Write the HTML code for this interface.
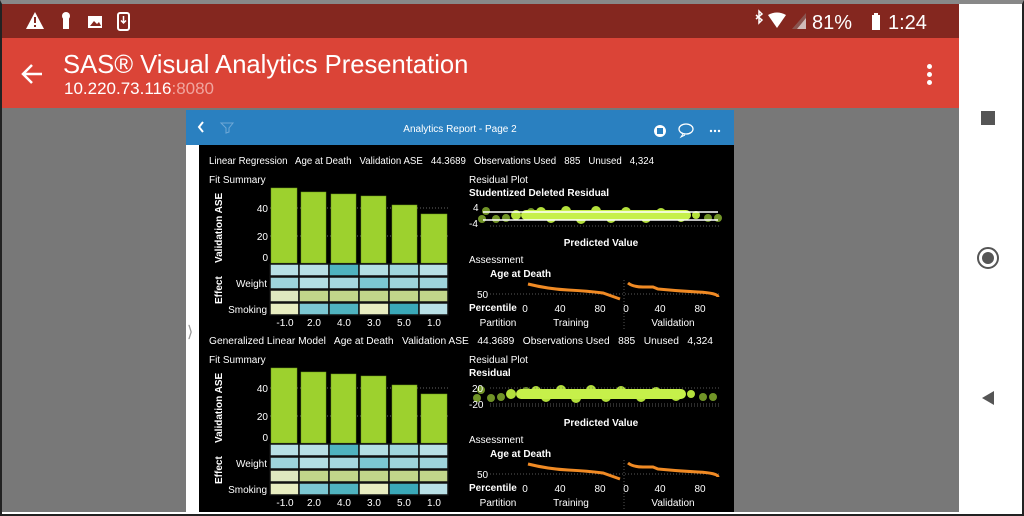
<!DOCTYPE html>
<html><head><meta charset="utf-8"><style>
body{margin:0;width:1024px;height:516px;overflow:hidden;background:#fff;font-family:"Liberation Sans",sans-serif;position:relative}
.a{position:absolute}
</style></head><body>
<div class="a" style="left:0;top:0;width:1024px;height:516px;box-sizing:border-box;border:2px solid #222;border-top:4px solid #888;"></div>
<div class="a" style="left:2px;top:4px;width:957px;height:34px;background:#84271f"></div>
<div class="a" style="left:2px;top:38px;width:957px;height:70px;background:#db4437"></div>
<div class="a" style="left:2px;top:108px;width:957px;height:404px;background:#787878"></div>
<div class="a" style="left:959px;top:4px;width:63px;height:508px;background:#fff"></div>
<svg class="a" style="left:0;top:4px" width="960" height="34">
<polygon points="35,8 44,25 26,25" fill="#fff"/><rect x="34" y="13" width="2" height="6" fill="#84271f"/><rect x="34" y="21" width="2" height="2" fill="#84271f"/>
<circle cx="66" cy="12" r="4" fill="#fff"/><rect x="63" y="13" width="6" height="12" fill="#fff"/>
<rect x="88" y="12" width="14" height="12" fill="#fff"/><polygon points="90,22 94,17 97,20 99,18 101,22" fill="#84271f"/>
<rect x="118" y="9" width="11" height="17" rx="2" fill="none" stroke="#fff" stroke-width="2"/><path d="M123.5 12v7m-2.5-2.5l2.5 2.5 2.5-2.5" stroke="#fff" stroke-width="1.5" fill="none"/>
<path d="M756 11l6 5-3 3v-12l3 3-6 5" stroke="#fff" stroke-width="1.5" fill="none"/>
<path d="M768 11q9-5 18 0l-9 13z" fill="#fff"/>
<polygon points="806,9 806,25 792,25" fill="#8a5550"/><polygon points="806,14 806,25 797,25" fill="#fff" opacity="0.6"/>
<text x="812" y="25" fill="#fff" font-size="20" font-family="Liberation Sans">81%</text>
<rect x="872" y="11" width="8" height="15" fill="#fff"/><rect x="874" y="9" width="4" height="2" fill="#fff"/>
<text x="888" y="25" fill="#fff" font-size="20" font-family="Liberation Sans">1:24</text>
</svg>
<svg class="a" style="left:20px;top:62px" width="26" height="24"><path d="M22 12H4M12 3l-9 9 9 9" stroke="#fff" stroke-width="2.5" fill="none"/></svg>
<div class="a" style="left:63px;top:50px;color:#fff;font-size:25.6px;line-height:30px">SAS® Visual Analytics Presentation</div>
<div class="a" style="left:64px;top:79px;color:#fff;font-size:17px;line-height:20px">10.220.73.116<span style="color:#f0a59e">:8080</span></div>
<div class="a" style="left:927px;top:64px;width:5px;height:5px;border-radius:50%;background:#fff;box-shadow:0 8px 0 #fff,0 16px 0 #fff"></div>
<div class="a" style="left:981px;top:111px;width:14px;height:14px;background:#555"></div>
<div class="a" style="left:977px;top:247px;width:18px;height:18px;border-radius:50%;border:2px solid #555;"></div>
<div class="a" style="left:982px;top:252px;width:12px;height:12px;border-radius:50%;background:#555"></div>
<svg class="a" style="left:980px;top:390px" width="16" height="16"><polygon points="14,1 14,15 2,8" fill="#555"/></svg>
<div class="a" style="left:186px;top:110px;width:548px;height:35px;background:#2a80c0"></div>
<div class="a" style="left:186px;top:145px;width:548px;height:367px;background:#000"></div>
<div class="a" style="left:186px;top:145px;width:13px;height:367px;background:#fff"></div>
<div class="a" style="left:187px;top:322px;color:#999;font-size:16px">⟩</div>
<svg class="a" style="left:186px;top:110px" width="548" height="35">
<path d="M17 12l-4 5 4 5" stroke="#fff" stroke-width="2" fill="none"/>
<path d="M35 13h12l-4 5v4l-3 1v-5z" stroke="#6fa8d6" stroke-width="1" fill="none"/>
<text x="274" y="22" fill="#fff" font-size="10" text-anchor="middle" font-family="Liberation Sans">Analytics Report - Page 2</text>
<circle cx="474" cy="21" r="6" fill="#fff"/><rect x="471" y="18" width="6" height="6" fill="#2a80c0"/>
<ellipse cx="500" cy="19" rx="7" ry="5" fill="none" stroke="#fff" stroke-width="1.3"/><path d="M497 24l-2 3 4-2" stroke="#fff" fill="none"/>
<circle cx="525" cy="21" r="1.2" fill="#fff"/><circle cx="529" cy="21" r="1.2" fill="#fff"/><circle cx="533" cy="21" r="1.2" fill="#fff"/>
</svg>
<svg class="a" style="left:0;top:0" width="1024" height="516" font-family="Liberation Sans" font-size="10">
<defs>
<g id="blk">
<text x="222" y="263" fill="#fff" font-size="10" font-weight="bold" transform="rotate(-90 222 263)">Validation ASE</text>
<text x="222" y="304" fill="#fff" font-size="10" font-weight="bold" transform="rotate(-90 222 304)">Effect</text>
<g stroke="#888" stroke-dasharray="1 2" stroke-width="0.7"><line x1="270" y1="208" x2="450" y2="208"/><line x1="270" y1="236" x2="450" y2="236"/></g>
<g fill="#fff" text-anchor="end"><text x="268" y="212">40</text><text x="268" y="240">20</text><text x="268" y="261">0</text>
<text x="267" y="287">Weight</text><text x="267" y="313">Smoking</text></g>
<g fill="#9dd12e" stroke="#6c9a1a" stroke-width="0.5">
<rect x="271" y="188" width="26" height="75"/><rect x="301" y="192" width="25" height="71"/><rect x="331" y="194" width="25" height="69"/><rect x="361" y="196" width="25" height="67"/><rect x="392" y="205" width="25" height="58"/><rect x="421" y="214" width="26" height="49"/>
</g>
<g stroke="#111" stroke-width="1.5">
<rect x="270" y="264" width="29" height="12" fill="#b8e0e6"/><rect x="299" y="264" width="30" height="12" fill="#b8e0e6"/><rect x="329" y="264" width="30" height="12" fill="#4fb3bf"/><rect x="359" y="264" width="30" height="12" fill="#b3dfe4"/><rect x="389" y="264" width="30" height="12" fill="#a0d6de"/><rect x="419" y="264" width="29" height="12" fill="#b8e0e6"/>
<rect x="270" y="277" width="29" height="12" fill="#9ed4dc"/><rect x="299" y="277" width="30" height="12" fill="#b3dfe4"/><rect x="329" y="277" width="30" height="12" fill="#a6d8e0"/><rect x="359" y="277" width="30" height="12" fill="#7cc7d2"/><rect x="389" y="277" width="30" height="12" fill="#9ed4dc"/><rect x="419" y="277" width="29" height="12" fill="#9ed4dc"/>
<rect x="270" y="290" width="29" height="12" fill="#dfe8c0"/><rect x="299" y="290" width="30" height="12" fill="#c2d68a"/><rect x="329" y="290" width="30" height="12" fill="#c2d68a"/><rect x="359" y="290" width="30" height="12" fill="#c2d68a"/><rect x="389" y="290" width="30" height="12" fill="#c2d68a"/><rect x="419" y="290" width="29" height="12" fill="#c2d68a"/>
<rect x="270" y="303" width="29" height="12" fill="#e8edc0"/><rect x="299" y="303" width="30" height="12" fill="#7cc7d2"/><rect x="329" y="303" width="30" height="12" fill="#4fb3bf"/><rect x="359" y="303" width="30" height="12" fill="#e8edc0"/><rect x="389" y="303" width="30" height="12" fill="#3aa8b8"/><rect x="419" y="303" width="29" height="12" fill="#b8e0e6"/>
</g>
<g fill="#fff" text-anchor="middle"><text x="285" y="326">-1.0</text><text x="314" y="326">2.0</text><text x="344" y="326">4.0</text><text x="374" y="326">3.0</text><text x="404" y="326">5.0</text><text x="434" y="326">1.0</text></g>
<text x="209" y="183" fill="#fff">Fit Summary</text>
<text x="469" y="183" fill="#fff">Residual Plot</text>
<text x="469" y="263" fill="#fff">Assessment</text>
<text x="601" y="246" fill="#fff" font-weight="bold" text-anchor="middle">Predicted Value</text>
<text x="490" y="277" fill="#fff" font-weight="bold">Age at Death</text>
<text x="477" y="298" fill="#fff">50</text>
<text x="469" y="311" fill="#fff" font-weight="bold">Percentile</text>
<g fill="#fff" text-anchor="middle"><text x="525" y="312">0</text><text x="560" y="312">40</text><text x="600" y="312">80</text><text x="626" y="312">0</text><text x="660" y="312">40</text><text x="700" y="312">80</text>
<text x="498" y="326">Partition</text><text x="571" y="326">Training</text><text x="673" y="326">Validation</text></g>
<g stroke="#777" stroke-dasharray="1 2" stroke-width="0.7"><line x1="490" y1="294" x2="720" y2="294"/><line x1="624" y1="280" x2="624" y2="330"/><line x1="490" y1="226" x2="720" y2="226"/></g>
<path d="M528 284q20 5 40 6t35 3l17 6" stroke="#f08a24" stroke-width="3" fill="none"/>
<path d="M628 283q5 4 15 4t10 0l5 2q20 2 40 3t20 5" stroke="#f08a24" stroke-width="3" fill="none"/>
</g>
<g id="blob">
<g fill="#7ea52c" opacity="0.9"><circle cx="0" cy="-4" r="4"/><circle cx="-4" cy="4" r="4"/><circle cx="10" cy="4" r="4"/><circle cx="20" cy="3" r="4"/><circle cx="222" cy="3" r="4"/><circle cx="232" cy="3" r="4"/><circle cx="45" cy="-3" r="4"/></g>
<g fill="#b4e03c"><circle cx="30" cy="0" r="5"/><circle cx="55" cy="-3" r="5"/><circle cx="65" cy="3" r="5"/><circle cx="80" cy="-4" r="5"/><circle cx="95" cy="4" r="5"/><circle cx="110" cy="-4" r="5"/><circle cx="125" cy="3" r="5"/><circle cx="140" cy="-3" r="5"/><circle cx="160" cy="3" r="5"/><circle cx="175" cy="-2" r="5"/><circle cx="195" cy="2" r="5"/><circle cx="210" cy="0" r="4"/></g>
<rect x="35" y="-5" width="170" height="10" rx="5" fill="#c6f04a"/>
</g>
</defs>
<use href="#blk"/>
<use href="#blk" y="180"/>
<text x="209" y="164" fill="#fff" xml:space="preserve" textLength="445" lengthAdjust="spacingAndGlyphs">Linear Regression   Age at Death   Validation ASE   44.3689   Observations Used   885   Unused   4,324</text>
<text x="209" y="344" fill="#fff" xml:space="preserve" textLength="504" lengthAdjust="spacingAndGlyphs">Generalized Linear Model   Age at Death   Validation ASE   44.3689   Observations Used   885   Unused   4,324</text>
<text x="469" y="196" fill="#fff" font-weight="bold">Studentized Deleted Residual</text>
<text x="469" y="376" fill="#fff" font-weight="bold">Residual</text>
<use href="#blob" x="486" y="215"/>
<line x1="483" y1="212" x2="718" y2="212" stroke="#fff" stroke-width="1.5"/>
<line x1="483" y1="220" x2="718" y2="220" stroke="#fff" stroke-width="1.5"/>
<text x="473" y="211" fill="#fff">4</text><text x="469" y="227" fill="#fff">-4</text>
<use href="#blob" x="481" y="394"/>
<g stroke="#777" stroke-dasharray="1 2" stroke-width="0.7"><line x1="490" y1="388" x2="720" y2="388"/><line x1="490" y1="404" x2="720" y2="404"/></g>
<text x="472" y="392" fill="#fff">20</text><text x="469" y="408" fill="#fff">-20</text>
</svg>
</body></html>
